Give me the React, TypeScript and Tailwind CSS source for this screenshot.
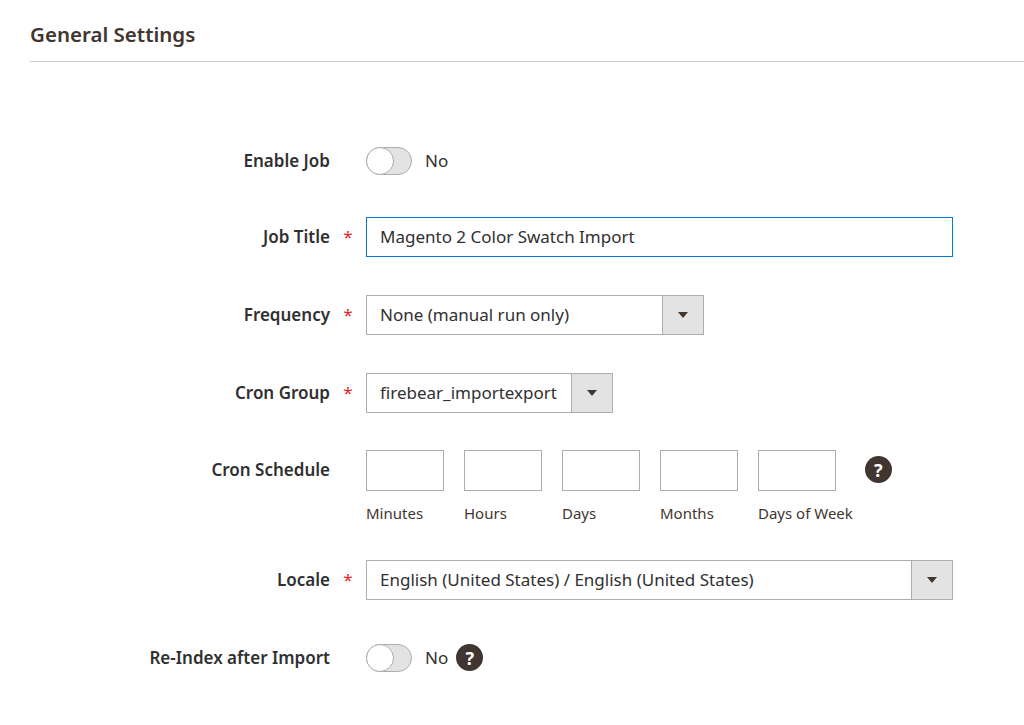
import React from "react";

const Label = ({ text, required }: { text: string; required?: boolean }) => (
  <div className="flex w-[366px] shrink-0 items-center justify-end">
    <span className="text-[17px] font-semibold text-[#303030]">{text}</span>
    <span className="w-[36px] text-center text-[17px] text-[#e22626]">{required ? "*" : ""}</span>
  </div>
);

const Toggle = () => (
  <div className="relative h-[28px] w-[46px] rounded-full border border-[#adadad] bg-[#e3e3e3]">
    <div className="absolute -left-px -top-px h-[28px] w-[28px] rounded-full border border-[#adadad] bg-white" />
  </div>
);

const Help = ({ className = "" }: { className?: string }) => (
  <div className={`flex h-[27px] w-[27px] items-center justify-center rounded-full bg-[#41362f] text-[18px] font-bold leading-none text-white ${className}`}>?</div>
);

const Select = ({ value, width }: { value: string; width: string }) => (
  <div className={`flex h-[40px] ${width} border border-[#adadad] bg-white`}>
    <div className="flex flex-1 items-center px-[13px] text-[17px] text-[#303030]">{value}</div>
    <div className="flex w-[41px] items-center justify-center border-l border-[#adadad] bg-[#e3e3e3]">
      <svg width="10" height="6" viewBox="0 0 10 6"><path d="M0 0h10L5 6z" fill="#41362f" /></svg>
    </div>
  </div>
);

export default function App() {
  const cron = ["Minutes", "Hours", "Days", "Months", "Days of Week"];
  return (
    <div className="min-h-[725px] bg-white font-['Open_Sans',sans-serif] text-[#303030]">
      <div className="ml-[30px] border-b border-[#cccccc] pt-[20px] pb-[13px]">
        <h2 className="text-[20.5px] font-semibold leading-[28px] text-[#41362f]">General Settings</h2>
      </div>

      <div className="mt-[79px] flex flex-col">
        <div className="flex h-[40px] items-center">
          <Label text="Enable Job" />
          <Toggle />
          <span className="ml-[13px] text-[17px] text-[#303030]">No</span>
        </div>

        <div className="mt-[36px] flex h-[40px] items-center">
          <Label text="Job Title" required />
          <div className="flex h-[40px] w-[587px] items-center border border-[#007bdb] px-[13px] text-[17px] text-[#303030]">
            Magento 2 Color Swatch Import
          </div>
        </div>

        <div className="mt-[38px] flex h-[40px] items-center">
          <Label text="Frequency" required />
          <Select value="None (manual run only)" width="w-[338px]" />
        </div>

        <div className="mt-[38px] flex h-[40px] items-center">
          <Label text="Cron Group" required />
          <Select value="firebear_importexport" width="w-[247px]" />
        </div>

        <div className="mt-[37px] flex items-start">
          <div className="flex h-[40px] items-center"><Label text="Cron Schedule" /></div>
          <div className="flex gap-[20px]">
            {cron.map((c) => (
              <div key={c} className="flex flex-col">
                <div className="h-[41px] w-[78px] border border-[#adadad] bg-white" />
                <span className="mt-[11px] text-[15px] text-[#41362f]">{c}</span>
              </div>
            ))}
          </div>
          <Help className="ml-[12px] mt-[6px]" />
        </div>

        <div className="mt-[35px] flex h-[40px] items-center">
          <Label text="Locale" required />
          <Select value="English (United States) / English (United States)" width="w-[587px]" />
        </div>

        <div className="mt-[38px] flex h-[40px] items-center">
          <Label text="Re-Index after Import" />
          <Toggle />
          <span className="ml-[13px] text-[17px] text-[#303030]">No</span>
          <Help className="ml-[8px]" />
        </div>
      </div>
    </div>
  );
}
